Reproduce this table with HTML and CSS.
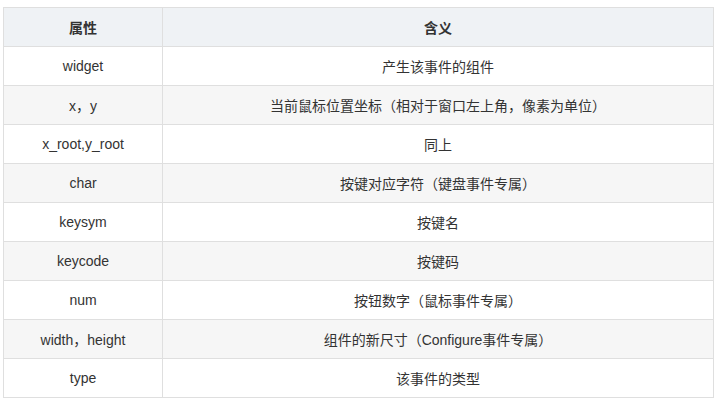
FILE: index.html
```html
<!DOCTYPE html>
<html lang="zh">
<head>
<meta charset="utf-8">
<link rel="stylesheet" href="styles.css">
</head>
<body>
<div class="wrap">
<table class="attr-table">
  <thead>
    <tr><th class="c1">属性</th><th>含义</th></tr>
  </thead>
  <tbody>
    <tr><td>widget</td><td>产生该事件的组件</td></tr>
    <tr><td>x，y</td><td>当前鼠标位置坐标（相对于窗口左上角，像素为单位）</td></tr>
    <tr><td>x_root,y_root</td><td>同上</td></tr>
    <tr><td>char</td><td>按键对应字符（键盘事件专属）</td></tr>
    <tr><td>keysym</td><td>按键名</td></tr>
    <tr><td>keycode</td><td>按键码</td></tr>
    <tr><td>num</td><td>按钮数字（鼠标事件专属）</td></tr>
    <tr><td>width，height</td><td>组件的新尺寸（Configure事件专属）</td></tr>
    <tr><td>type</td><td>该事件的类型</td></tr>
  </tbody>
</table>
</div>
</body>
</html>
```
FILE: styles.css
```css
html, body {
  margin: 0;
  padding: 0;
  background: #fff;
}
.wrap {
  padding: 7px 0 0 3px;
}
.attr-table {
  border-collapse: collapse;
  width: 711px;
  font-family: "Liberation Sans", "Noto Sans CJK SC", sans-serif;
  font-size: 14px;
  color: #333;
  table-layout: fixed;
}
.attr-table th,
.attr-table td {
  border: 1px solid #dfdfdf;
  height: 39px;
  padding: 0 8px;
  text-align: center;
  vertical-align: middle;
  box-sizing: border-box;
}
.attr-table th {
  background: #eff2f5;
  font-weight: bold;
  color: #333;
}
.attr-table .c1 {
  width: 159px;
}
.attr-table tbody tr:nth-child(even) td {
  background: #f6f6f6;
}
```
